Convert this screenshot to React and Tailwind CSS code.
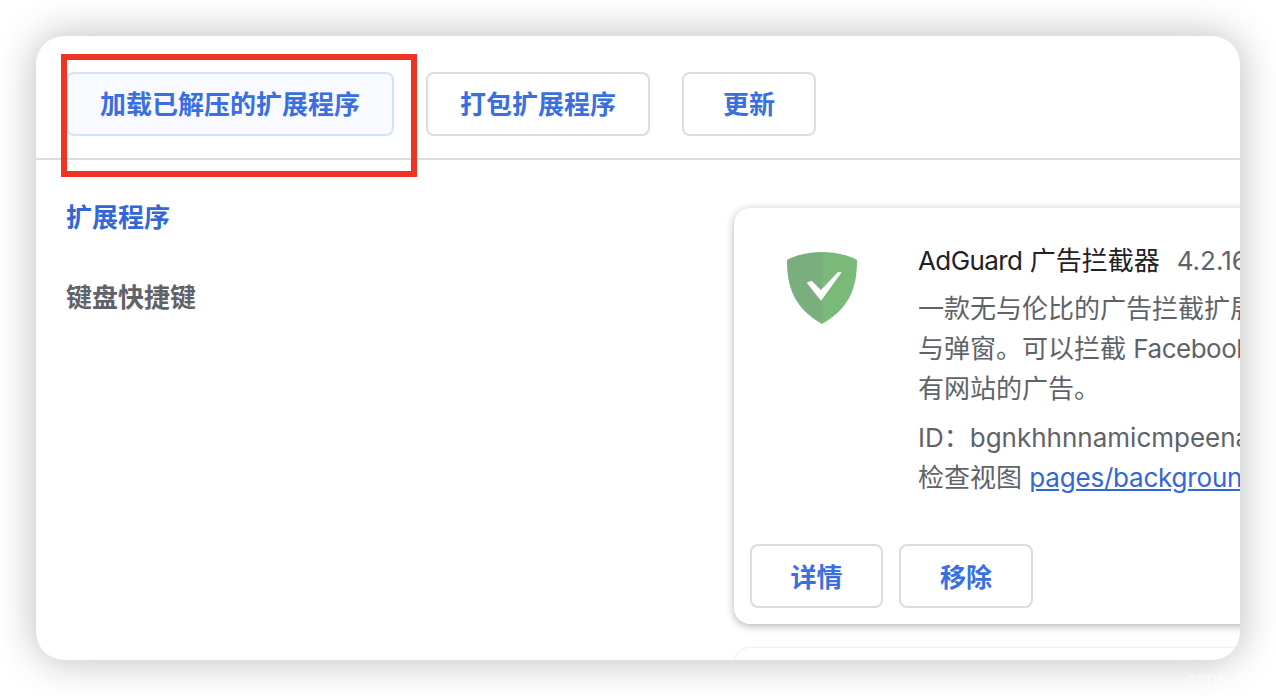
const sans = 'font-["Inter","Noto_Sans_CJK_SC",sans-serif]'

function Btn({ children, width, active }) {
  return (
    <button
      className={
        'h-16 shrink-0 rounded-lg border-2 text-[26px] font-semibold text-[#3a6fe0] ' +
        width +
        (active ? ' border-[#d3e3fd] bg-[#f8faff]' : ' border-[#dadce0] bg-white')
      }
    >
      {children}
    </button>
  )
}

function Shield() {
  return (
    <svg width="80" height="80" viewBox="0 0 80 80" className="shrink-0">
      <path d="M40 4C28 4 15 6.500 5 12c0 24 5 47 35 64z" fill="#7aae7f" />
      <path d="M40 4c12 0 25 2.500 35 8 0 24-5 47-35 64z" fill="#7aba78" />
      <path d="M24.700 34.700L39 52.700 59.700 24.300h-4L39 42l-9.300-9.300z" fill="#fff" />
    </svg>
  )
}

export default function App() {
  return (
    <div className={'relative h-[696px] w-[1276px] overflow-hidden bg-white p-9 ' + sans}>
      <div className="relative h-[624px] w-[1204px] rounded-[28px] bg-white shadow-[0_0_40px_rgba(0,0,0,0.28)]">
        <div className="h-full w-full overflow-hidden rounded-[28px]">
          {/* Barra de ações */}
          <div className="flex h-[124px] gap-8 border-b-2 border-[#dadce0] pl-[30px] pt-9">
            <Btn width="w-[328px]" active>加载已解压的扩展程序</Btn>
            <Btn width="w-[224px]">打包扩展程序</Btn>
            <Btn width="w-[134px]">更新</Btn>
          </div>

          <div className="flex">
            {/* Menu lateral */}
            <nav className="flex w-[698px] shrink-0 flex-col gap-[46px] pl-[30px] pt-[41px] text-[26px] font-semibold leading-[34px]">
              <span className="text-[#3367d6]">扩展程序</span>
              <span className="text-[#5f6368]">键盘快捷键</span>
            </nav>

            {/* Cartões */}
            <div className="flex shrink-0 flex-col gap-6 pt-12">
              <div className="flex h-[416px] w-[800px] flex-col rounded-2xl bg-white shadow-[0_2px_8px_rgba(0,0,0,0.3)]">
                <div className="flex flex-1">
                  <div className="w-[184px] shrink-0 pl-12 pt-10">
                    <Shield />
                  </div>
                  <div className="min-w-0 flex-1 whitespace-nowrap pt-[33px] text-[26px] leading-10 text-[#5f6368]">
                    <div className="flex gap-[17px]">
                      <span className="text-[#202124]">
                        <span className="tracking-[-0.6px]">AdGuard</span> 广告拦截器
                      </span>
                      <span>4.2.168</span>
                    </div>
                    <div className="mt-2">一款无与伦比的广告拦截扩展程序</div>
                    <div>
                      与弹窗。可以拦截 <span className="tracking-[-0.5px]">Facebook</span>
                    </div>
                    <div>有网站的广告。</div>
                    <div className="mt-[9px]">ID：bgnkhhnnamicmpeenaldn</div>
                    <div>
                      检查视图{' '}
                      <span className="tracking-[-0.2px] text-[#3367d6] underline">pages/background.html</span>
                    </div>
                  </div>
                </div>
                <div className="flex gap-4 pb-4 pl-4">
                  <Btn width="w-[133px] pt-0.5">详情</Btn>
                  <Btn width="w-[134px] pt-0.5">移除</Btn>
                </div>
              </div>
              <div className="h-[100px] w-[800px] rounded-2xl bg-white shadow-[0_0_3px_rgba(0,0,0,0.15)]" />
            </div>
          </div>
        </div>

        {/* Destaque vermelho */}
        <div className="absolute left-[25px] top-[18px] h-[123px] w-[356px] border-[6px] border-[#ee3524]" />
      </div>

      {/* Marca d'água */}
      <span className="absolute left-[1186px] top-[671px] text-[15px] leading-5 text-white/60">CSDN @XC</span>
    </div>
  )
}
